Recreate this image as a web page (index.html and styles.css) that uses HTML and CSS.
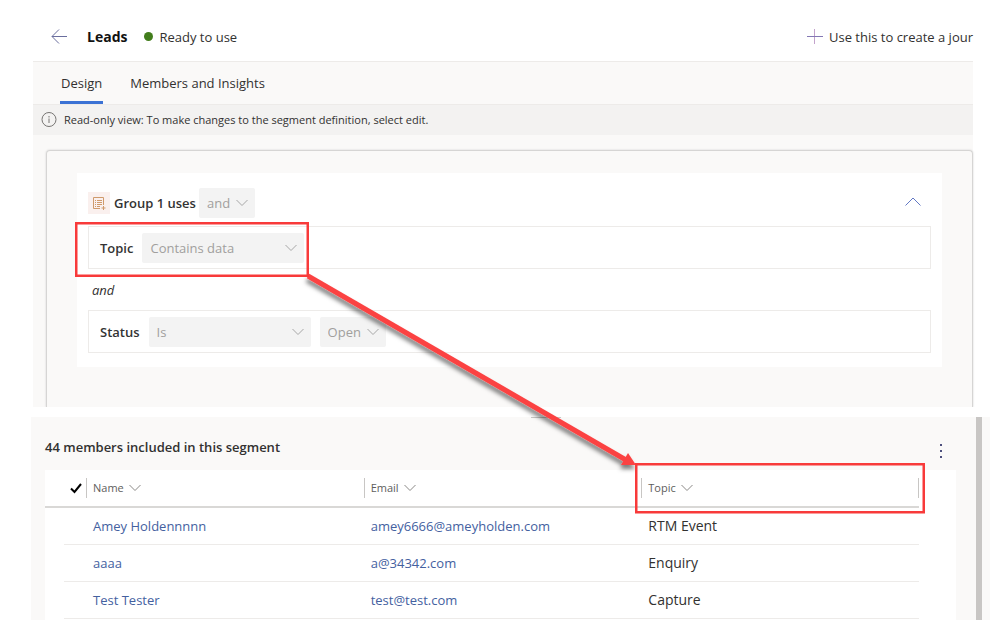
FILE: index.html
```html
<!DOCTYPE html>
<html lang="en">
<head>
    <meta charset="UTF-8">
    <meta name="viewport" content="width=device-width, initial-scale=1.0">
    <title>Leads</title>
    <link rel="stylesheet" href="styles.css">
</head>
<body>
    <svg class="symbols" aria-hidden="true">
        <symbol id="chevron" viewBox="0 0 12 12">
            <path d="M0.5 3 L6 8.5 L11.5 3" fill="none" stroke="currentColor"/>
        </symbol>
    </svg>

    <main class="segment">
        <header class="header">
            <button class="back" aria-label="Back">
                <svg width="16" height="16" viewBox="0 0 16 16"><path d="M8 0.5 L1 7.5 L8 14.5 M1 7.5 H16" fill="none" stroke="#6a6e9e"/></svg>
            </button>
            <h1>Leads</h1>
            <span class="status"><span class="dot"></span>Ready to use</span>
            <button class="create">
                <svg width="16" height="16" viewBox="0 0 16 16"><path d="M7.5 0 V15" stroke="#c3a3cc"/><path d="M0 7.5 H16" stroke="#8478b4"/></svg>
                Use this to create a jour
            </button>
        </header>
        <nav class="tabs">
            <a class="active" href="#design">Design</a>
            <a href="#members">Members and Insights</a>
        </nav>
        <div class="info">
            <svg width="16" height="16" viewBox="0 0 16 16"><circle cx="8" cy="7.5" r="7" fill="none" stroke="#777573"/><path d="M8 6.5 V11 M8 4 V5.5" stroke="#777573"/></svg>
            Read-only view: To make changes to the segment definition, select edit.
        </div>
        <div class="canvas">
            <div class="card">
                <section class="group">
                    <div class="group-head">
                        <span class="group-icon">
                            <svg width="14" height="14" viewBox="0 0 14 14" fill="none" stroke="#cf9a6c"><path d="M8 12.5 H1.5 V1.5 H11.5 V9"/><path d="M3 4.5 H4 M5 4.5 H10 M3 6.5 H4 M5 6.5 H10 M3 8.5 H4 M5 8.5 H10 M3 10.5 H4 M5 10.5 H8"/><path d="M11.5 10 V14 M9.5 12 H13.5"/></svg>
                        </span>
                        <label for="operator">Group 1 uses</label>
                        <span class="select small">
                            <select id="operator" disabled><option>and</option></select>
                            <svg class="chevron"><use href="#chevron"/></svg>
                        </span>
                        <button class="collapse" aria-label="Collapse group">
                            <svg width="16" height="12" viewBox="0 0 16 12"><path d="M0.5 8.5 L8 1 L15.5 8.5" fill="none" stroke="#6278c4"/></svg>
                        </button>
                    </div>
                    <div class="rule">
                        <label for="topic">Topic</label>
                        <span class="select wide">
                            <select id="topic" disabled><option>Contains data</option></select>
                            <svg class="chevron"><use href="#chevron"/></svg>
                        </span>
                    </div>
                    <p class="joiner">and</p>
                    <div class="rule">
                        <label for="status">Status</label>
                        <span class="select wide">
                            <select id="status" disabled><option>Is</option></select>
                            <svg class="chevron"><use href="#chevron"/></svg>
                        </span>
                        <span class="select value">
                            <select aria-label="Status value" disabled><option>Open</option></select>
                            <svg class="chevron"><use href="#chevron"/></svg>
                        </span>
                    </div>
                </section>
            </div>
        </div>
    </main>

    <section class="members">
        <div class="members-main">
            <span class="grip"></span>
            <div class="members-head">
                <h2>44 members included in this segment</h2>
                <button class="more" aria-label="More">
                    <svg width="4" height="14" viewBox="0 0 4 14" fill="#4c4f7d"><rect x="1" y="0" width="2" height="2"/><rect x="1" y="6" width="2" height="2"/><rect x="1" y="12" width="2" height="2"/></svg>
                </button>
            </div>
            <div class="grid">
                <table>
                    <thead>
                        <tr>
                            <th class="gutter"></th>
                            <th class="check">
                                <button aria-label="Select all">
                                    <svg width="12" height="12" viewBox="0 0 12 12"><path d="M1 6.5 L4.5 10 L11 2" fill="none" stroke="#000" stroke-width="2"/></svg>
                                </button>
                            </th>
                            <th><button>Name <svg class="chevron"><use href="#chevron"/></svg></button></th>
                            <th><button>Email <svg class="chevron"><use href="#chevron"/></svg></button></th>
                            <th><button>Topic <svg class="chevron"><use href="#chevron"/></svg></button></th>
                        </tr>
                    </thead>
                    <tbody>
                        <tr>
                            <td class="gutter"></td><td></td>
                            <td><a href="#amey">Amey Holdennnnn</a></td>
                            <td><a href="mailto:amey6666@ameyholden.com">amey6666@ameyholden.com</a></td>
                            <td>RTM Event</td>
                        </tr>
                        <tr>
                            <td class="gutter"></td><td></td>
                            <td><a href="#aaaa">aaaa</a></td>
                            <td><a href="mailto:a@34342.com">a@34342.com</a></td>
                            <td>Enquiry</td>
                        </tr>
                        <tr>
                            <td class="gutter"></td><td></td>
                            <td><a href="#tester">Test Tester</a></td>
                            <td><a href="mailto:test@test.com">test@test.com</a></td>
                            <td>Capture</td>
                        </tr>
                    </tbody>
                </table>
            </div>
        </div>
        <div class="scrollbar"></div>
    </section>

    <!-- callout from the Topic rule to the Topic column -->
    <svg class="callout" width="1000" height="636" viewBox="0 0 1000 636" aria-hidden="true">
        <defs>
            <filter id="shadow" x="-10%" y="-10%" width="120%" height="120%">
                <feDropShadow dx="-1" dy="4" stdDeviation="2" flood-color="#000" flood-opacity="0.5"/>
            </filter>
        </defs>
        <g filter="url(#shadow)">
            <path d="M308 276 L626 460" stroke="#fb4343" stroke-width="5"/>
            <path d="M636 465 L621 465 L628 453 Z" fill="#fb4343"/>
        </g>
        <rect x="76.25" y="223.25" width="231.5" height="52.5" fill="none" stroke="#f83a3a" stroke-width="2.5"/>
        <rect x="636.25" y="464.25" width="287.5" height="48" fill="none" stroke="#f83a3a" stroke-width="2.5"/>
    </svg>
</body>
</html>
```
FILE: styles.css
```css
* {
    box-sizing: border-box;
}
body {
    margin: 0;
    position: relative;
    background: #fff;
    color: #323130;
    font-family: "Segoe UI", "Open Sans", "Noto Sans", sans-serif;
    font-size: 13px;
    line-height: 18px;
}
h1, h2, p {
    margin: 0;
}
a {
    text-decoration: none;
}
button {
    display: flex;
    align-items: center;
    padding: 0;
    border: none;
    background: none;
    font: inherit;
    color: inherit;
    cursor: pointer;
}
svg {
    display: block;
    flex: none;
}
.symbols {
    position: absolute;
    width: 0;
    height: 0;
}
.chevron {
    width: 12px;
    height: 12px;
}

/* Top part */
.segment {
    margin: 0 27px 10px 33px;
    background: #faf9f8;
}
.header {
    display: flex;
    align-items: center;
    height: 62px;
    padding: 12px 0 0 18px;
    background: #fff;
    border-bottom: 1px solid #edebe9;
}
.header h1 {
    margin-left: 20px;
    font-size: 14px;
    font-weight: 700;
    color: #111;
}
.status {
    display: flex;
    align-items: center;
    gap: 6px;
    margin-left: 17px;
}
.dot {
    width: 9px;
    height: 9px;
    border-radius: 50%;
    background: #427d1c;
}
.create {
    gap: 6px;
    margin-left: auto;
    white-space: nowrap;
}
.tabs {
    display: flex;
    gap: 26px;
    height: 43px;
    padding-left: 27px;
    border-bottom: 1px solid #edebe9;
}
.tabs a {
    padding: 12px 1px 0;
    border-bottom: 3px solid transparent;
    color: #323130;
}
.tabs .active {
    border-color: #3b72d4;
    font-weight: 500;
}
.info {
    display: flex;
    align-items: center;
    gap: 7px;
    height: 30px;
    padding-left: 8px;
    background: #f3f2f1;
    font-size: 11px;
}
.canvas {
    padding: 15px 0 0 13px;
}
.card {
    padding: 22px 30px 40px;
    border: 1px solid #d6d5d4;
    border-bottom: none;
    border-radius: 4px 4px 0 0;
    box-shadow: 0 0 2px #ccc;
    clip-path: inset(-3px -3px 0 -3px);
}
.group {
    padding: 15px 11px 14px;
    background: #fff;
}
.group-head {
    display: flex;
    align-items: center;
    height: 30px;
    margin-bottom: 8px;
}
.group-icon {
    display: flex;
    align-items: center;
    justify-content: center;
    width: 22px;
    height: 22px;
    margin-right: 4px;
    background: #faf0ee;
}
.group-head label, .rule label {
    font-weight: 600;
    color: #333;
}
.group-head .select {
    margin-left: 3px;
}
.collapse {
    margin: 0 10px 0 auto;
}
.select {
    position: relative;
    height: 30px;
}
.select select {
    width: 100%;
    height: 100%;
    padding: 0 8px;
    border: none;
    border-radius: 2px;
    background: #f3f3f3;
    color: #a19f9d;
    opacity: 1;
    font: inherit;
    appearance: none;
}
.select .chevron {
    position: absolute;
    top: 9px;
    right: 7px;
    color: #a6a6a6;
    pointer-events: none;
}
.small {
    width: 56px;
}
.wide {
    width: 162px;
}
.value {
    width: 66px;
}
.rule {
    display: flex;
    align-items: center;
    gap: 9px;
    height: 43px;
    padding-left: 11px;
    border: 1px solid #edebe9;
}
.joiner {
    padding: 12px 4px 11px;
    font-style: italic;
}

/* Members list */
.members {
    display: flex;
    margin: 0 10px 16px 31px;
    background: #faf9f8;
}
.members-main {
    position: relative;
    flex: 1;
    padding: 0 20px 0 14px;
}
.grip {
    position: absolute;
    top: 0;
    left: calc(50% + 27px);
    width: 30px;
    height: 1px;
    background: #c8c6c4;
}
.members-head {
    display: flex;
    align-items: center;
    justify-content: space-between;
    height: 53px;
    padding: 6px 13px 0 0;
}
.members h2 {
    font-size: 13px;
    font-weight: 600;
}
.more {
    padding-top: 9px;
}
.grid {
    padding: 0 37px 1px 0;
    background: #fff;
}
table {
    width: 100%;
    table-layout: fixed;
    border-collapse: collapse;
}
th, td {
    height: 37px;
    padding: 0 0 0 7px;
    border-bottom: 1px solid #edebe9;
    text-align: left;
    font-weight: 400;
}
th {
    padding: 0;
    border-bottom: 2px solid #d9d8d6;
    font-size: 11px;
    color: #605e5c;
}
th button {
    gap: 5px;
    width: 100%;
    height: 20px;
    padding-left: 6px;
    border-left: 1px solid #c8c6c4;
}
th .chevron {
    color: #8a8886;
}
th:last-child button {
    border-right: 1px solid #c8c6c4;
}
.gutter {
    width: 19px;
    padding: 0;
}
td.gutter {
    border: none;
}
.check {
    width: 22px;
}
.check button {
    border: none;
}
td a {
    color: #44619f;
}
td:last-child {
    font-size: 14px;
}
.scrollbar {
    width: 14px;
    border-left: 6px solid #c8c6c4;
}

.callout {
    position: absolute;
    top: 0;
    left: 0;
    pointer-events: none;
}
```
